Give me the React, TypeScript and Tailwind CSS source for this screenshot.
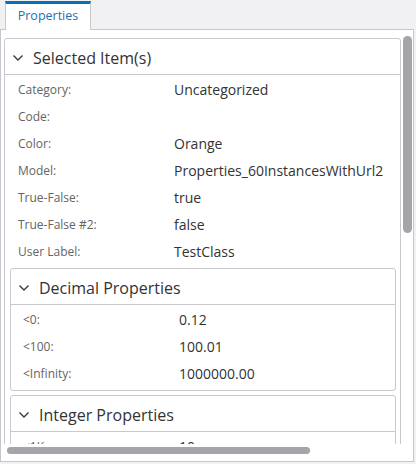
import React from "react";

function Chevron({ className = "" }: { className?: string }) {
  return (
    <svg width="12" height="8" viewBox="0 0 12 8" className={className}>
      <path d="M1.5 1.5 L6 6 L10.5 1.5" fill="none" stroke="#3a3a3a" strokeWidth="1.4" />
    </svg>
  );
}

type Row = [string, string];

function Rows({ rows, labelPad, valueLeft }: { rows: Row[]; labelPad: string; valueLeft: string }) {
  return (
    <div>
      {rows.map(([k, v]) => (
        <div key={k} className="flex h-[27px] items-center whitespace-nowrap pt-[2px]">
          <div className={`${labelPad} ${valueLeft} shrink-0 text-[12px] text-[#646464]`}>{k}</div>
          <div className="text-[14px] text-[#333333]">{v}</div>
        </div>
      ))}
    </div>
  );
}

export default function App() {
  const main: Row[] = [
    ["Category:", "Uncategorized"],
    ["Code:", ""],
    ["Color:", "Orange"],
    ["Model:", "Properties_60InstancesWithUrl2"],
    ["True-False:", "true"],
    ["True-False #2:", "false"],
    ["User Label:", "TestClass"],
  ];
  const dec: Row[] = [
    ["<0:", "0.12"],
    ["<100:", "100.01"],
    ["<Infinity:", "1000000.00"],
  ];
  const int: Row[] = [["<1K:", "10"]];
  return (
    <div
      className="relative h-[464px] w-[416px] overflow-hidden bg-[#f1f1f4]"
      style={{ fontFamily: '"Open Sans", "Noto Sans", sans-serif' }}
    >
      {/* tab bar */}
      <div className="flex h-[29px] items-end pl-[5px]">
        <div className="relative z-10 -mb-px flex h-[29px] w-[86px] items-center justify-center border-x border-[#c8c8ce] border-t-[3px] border-t-[#0a6fb8] bg-white pb-[1px] text-[12.5px] text-[#1f6fb5]">
          Properties
        </div>
      </div>
      {/* panel */}
      <div className="relative mr-[2px] h-[433px] border border-[#c6c6cc] bg-white">
        <div className="h-[414px] w-[401px] overflow-hidden pl-[3px] pt-[8px]">
          <div className="w-[397px] rounded-[3px] border border-[#c8c8ce]">
            <div className="flex h-[36px] items-center gap-[9px] border-b border-[#c8c8ce] pl-[7px] pt-[2px]">
              <Chevron />
              <span className="text-[16px] text-[#333333]">Selected Item(s)</span>
            </div>
            <Rows rows={main} labelPad="pl-[13px]" valueLeft="w-[169px]" />
            <div className="ml-[5px] mr-[4px] mt-[4px] rounded-[3px] border border-[#c8c8ce] pb-[4px]">
              <div className="flex h-[36px] items-center gap-[9px] border-b border-[#c8c8ce] pl-[7px] pt-[2px]">
                <Chevron />
                <span className="text-[16px] text-[#333333]">Decimal Properties</span>
              </div>
              <Rows rows={dec} labelPad="pl-[12px]" valueLeft="w-[168px]" />
            </div>
            <div className="ml-[5px] mr-[4px] mt-[4px] rounded-[3px] border border-[#c8c8ce]">
              <div className="flex h-[36px] items-center gap-[9px] border-b border-[#c8c8ce] pl-[7px] pt-[2px]">
                <Chevron />
                <span className="text-[16px] text-[#333333]">Integer Properties</span>
              </div>
              <Rows rows={int} labelPad="pl-[12px]" valueLeft="w-[168px]" />
            </div>
          </div>
        </div>
        {/* scrollbars */}
        <div className="absolute left-[402px] top-[6px] h-[197px] w-[9px] rounded-full bg-[#a4a4a9]" />
        <div className="absolute left-[6px] top-[417px] h-[7px] w-[303px] rounded-full bg-[#a4a4a9]" />
      </div>
    </div>
  );
}
